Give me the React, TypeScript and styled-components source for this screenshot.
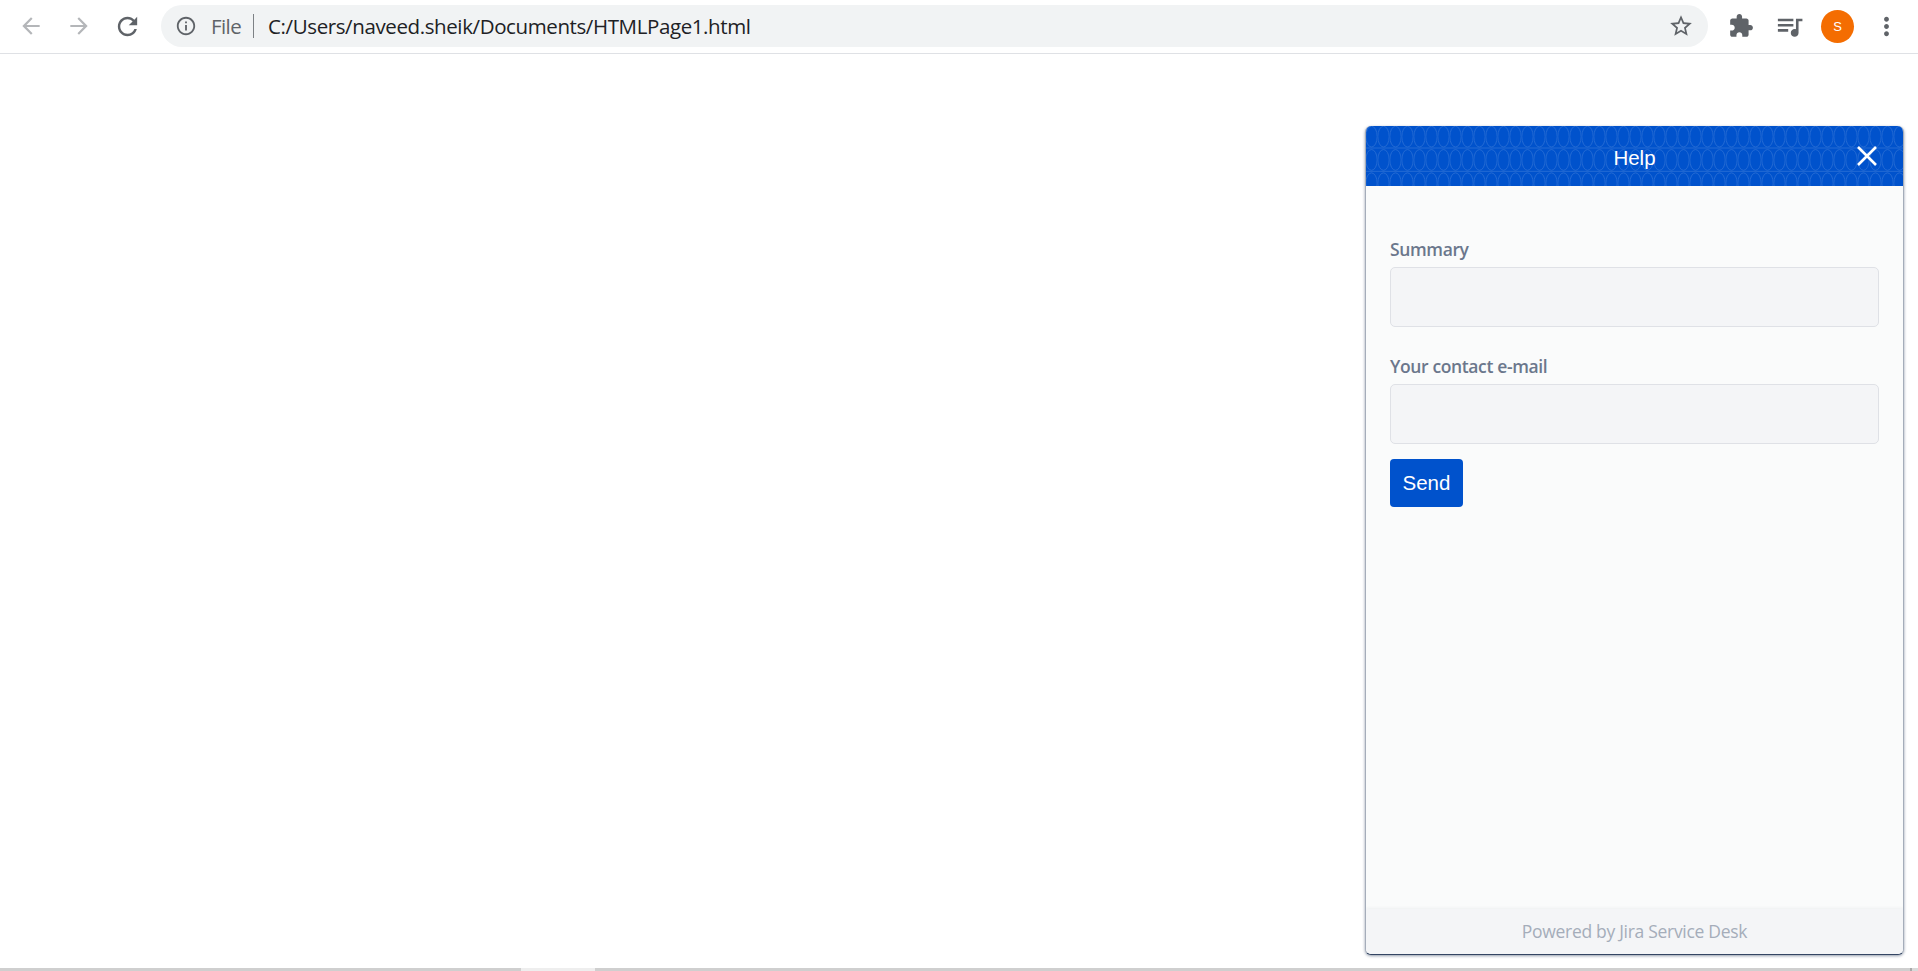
import React from "react";
import styled, { createGlobalStyle } from "styled-components";

const GlobalStyle = createGlobalStyle`
  html, body { margin: 0; padding: 0; height: 100%; background: #fff; overflow: hidden; }
  #root { height: 100%; }
  * { box-sizing: border-box; }
`;

const patternRows = [0, 23.33, 46.67]
  .map(
    (y) =>
      `<ellipse cx="6.5" cy="${y + 10.6}" rx="5.7" ry="10.4"/><path d="M-1 ${y + 22}h14"/>`
  )
  .join("");

const patternSvg = encodeURIComponent(
  `<svg xmlns="http://www.w3.org/2000/svg" width="12" height="70" viewBox="0 0 12 70"><g fill="none" stroke="#fff" stroke-width="0.9" opacity="0.15">${patternRows}</g></svg>`
);

const Page = styled.div`
  display: flex;
  flex-direction: column;
  width: 1918px;
  height: 971px;
`;

const Toolbar = styled.header`
  flex: none;
  display: flex;
  align-items: center;
  height: 54px;
  padding: 0 0 1px 15px;
  border-bottom: 1px solid #dfe1e5;
  background: #fff;
`;

const NavButton = styled.span<{ $disabled?: boolean }>`
  display: flex;
  flex: none;
  width: 32px;
  height: 32px;
  margin-right: 16px;
  align-items: center;
  justify-content: center;
  color: ${(p) => (p.$disabled ? "#b4b6b9" : "#5f6368")};
`;

const Omnibox = styled.div`
  display: flex;
  flex: none;
  align-items: center;
  width: 1547px;
  height: 42px;
  margin-left: 2px;
  padding: 0 14px 0 14px;
  border-radius: 21px;
  background: #f1f3f4;
  color: #5f6368;
`;

const Scheme = styled.span`
  margin-left: 14px;
  font: 400 20.5px "Open Sans", sans-serif;
  letter-spacing: -0.6px;
  color: #5f6368;
`;

const Divider = styled.span`
  flex: none;
  width: 1px;
  height: 24px;
  margin: 0 14px 0 12px;
  background: #7d8185;
`;

const Url = styled.span`
  flex: 1;
  font: 400 20.5px "Open Sans", sans-serif;
  letter-spacing: -0.39px;
  color: #202124;
`;

const ToolIcons = styled.div`
  display: flex;
  flex: none;
  align-items: center;
  margin-left: 17px;
  gap: 16px;
`;

const ToolIcon = styled.span`
  display: flex;
  width: 32px;
  height: 32px;
  align-items: center;
  justify-content: center;
  color: #5f6368;
`;

const Avatar = styled.span`
  display: flex;
  width: 33px;
  height: 33px;
  border-radius: 50%;
  align-items: center;
  justify-content: center;
  background: #f46d01;
  color: #fff;
  font: 400 13px "Liberation Sans", sans-serif;
`;

const Content = styled.main`
  flex: 1;
  display: flex;
  justify-content: flex-end;
  align-items: flex-start;
  padding: 72px 14px 0 0;
`;

const Widget = styled.section`
  display: flex;
  flex-direction: column;
  width: 539px;
  height: 829px;
  border-radius: 6px;
  overflow: hidden;
  background: #fafbfb;
  border: 1px solid #a5adba;
  border-top: none;
  border-bottom: 1.5px solid #344563;
  box-shadow: 0 1px 3px rgba(9, 30, 66, 0.45);
`;

const WidgetHeader = styled.div`
  position: relative;
  flex: none;
  display: flex;
  align-items: center;
  justify-content: center;
  height: 60px;
  margin: 0 -1px;
  padding-top: 4px;
  background-color: #0052cc;
  background-image: url("data:image/svg+xml,${patternSvg}");
  color: #fff;
  font: 400 20.5px "Liberation Sans", sans-serif;
`;

const CloseButton = styled.span`
  position: absolute;
  top: 19px;
  right: 26px;
  display: flex;
  color: #fff;
`;

const Form = styled.form`
  flex: 1;
  display: flex;
  flex-direction: column;
  align-items: flex-start;
  padding: 50px 24px 0 24px;
`;

const Label = styled.label`
  margin-bottom: 5px;
  font: 600 17.5px/26px "Open Sans", sans-serif;
  letter-spacing: -0.37px;
  color: #6b778c;
`;

const Field = styled.div`
  width: 100%;
  height: 60px;
  margin-bottom: 26px;
  border: 1px solid #dfe1e6;
  border-radius: 5px;
  background: #f4f5f7;
  &:last-of-type { margin-bottom: 15px; }
`;

const SendButton = styled.button`
  width: 73px;
  height: 48px;
  padding: 0;
  border: none;
  border-radius: 4px;
  background: #0052cc;
  color: #fff;
  font: 400 20.5px "Liberation Sans", sans-serif;
`;

const Footer = styled.footer`
  flex: none;
  display: flex;
  align-items: center;
  justify-content: center;
  height: 45px;
  padding-bottom: 1px;
  background: #f4f5f7;
  box-shadow: 0 -1px 3px rgba(9, 30, 66, 0.05);
  font: 400 17.5px "Open Sans", sans-serif;
  letter-spacing: -0.3px;
  color: #a5adba;
`;

const HScroll = styled.div`
  flex: none;
  display: flex;
  height: 3px;
  background: #cfcfcf;
`;

const HScrollTrack = styled.span<{ $w: number; $c: string }>`
  flex: none;
  width: ${(p) => p.$w}px;
  background: ${(p) => p.$c};
`;

const MaterialIcon = ({ d, size = 24 }: { d: string; size?: number }) => (
  <svg width={size} height={size} viewBox="0 0 24 24" fill="currentColor">
    <path d={d} />
  </svg>
);

const icons = {
  back: "M20 11H7.83l5.59-5.59L12 4l-8 8 8 8 1.41-1.41L7.83 13H20v-2z",
  forward: "M12 4l-1.41 1.41L16.17 11H4v2h12.17l-5.58 5.59L12 20l8-8z",
  reload:
    "M17.65 6.35C16.2 4.9 14.21 4 12 4c-4.42 0-7.99 3.58-7.99 8s3.57 8 7.99 8c3.73 0 6.84-2.55 7.73-6h-2.08c-.82 2.33-3.04 4-5.65 4-3.31 0-6-2.69-6-6s2.69-6 6-6c1.66 0 3.14.69 4.22 1.78L13 11h7V4l-2.35 2.35z",
  info:
    "M11 17h2v-6h-2v6zm1-15C6.48 2 2 6.48 2 12s4.48 10 10 10 10-4.48 10-10S17.52 2 12 2zm0 18c-4.41 0-8-3.59-8-8s3.59-8 8-8 8 3.59 8 8-3.59 8-8 8zm-1-11h2V7h-2v2z",
  star:
    "M22 9.24l-7.19-.62L12 2 9.19 8.63 2 9.24l5.46 4.73L5.82 21 12 17.27 18.18 21l-1.63-7.03L22 9.24zM12 15.4l-3.76 2.27 1-4.28-3.32-2.88 4.38-.38L12 6.1l1.71 4.04 4.38.38-3.32 2.88 1 4.28L12 15.4z",
  puzzle:
    "M20.5 11H19V7c0-1.1-.9-2-2-2h-4V3.5C13 2.12 11.88 1 10.5 1S8 2.12 8 3.5V5H4c-1.1 0-1.99.9-1.99 2v3.8H3.5c1.49 0 2.7 1.21 2.7 2.7s-1.21 2.7-2.7 2.7H2V20c0 1.1.9 2 2 2h3.8v-1.5c0-1.49 1.21-2.7 2.7-2.7 1.49 0 2.7 1.21 2.7 2.7V22H17c1.1 0 2-.9 2-2v-4h1.5c1.38 0 2.5-1.12 2.5-2.5S21.88 11 20.5 11z",
  queue:
    "M15 6H3v2h12V6zm0 4H3v2h12v-2zM3 16h8v-2H3v2zM17 6v8.18c-.31-.11-.65-.18-1-.18-1.66 0-3 1.34-3 3s1.34 3 3 3 3-1.34 3-3V8h3V6h-5z",
  more:
    "M12 8c1.1 0 2-.9 2-2s-.9-2-2-2-2 .9-2 2 .9 2 2 2zm0 2c-1.1 0-2 .9-2 2s.9 2 2 2 2-.9 2-2-.9-2-2-2zm0 6c-1.1 0-2 .9-2 2s.9 2 2 2 2-.9 2-2-.9-2-2-2z",
};

export default function App() {
  return (
    <Page>
      <GlobalStyle />
      <Toolbar>
        <NavButton $disabled><MaterialIcon d={icons.back} size={26} /></NavButton>
        <NavButton $disabled><MaterialIcon d={icons.forward} size={26} /></NavButton>
        <NavButton><MaterialIcon d={icons.reload} size={29} /></NavButton>
        <Omnibox>
          <MaterialIcon d={icons.info} size={22} />
          <Scheme>File</Scheme>
          <Divider />
          <Url>C:/Users/naveed.sheik/Documents/HTMLPage1.html</Url>
          <MaterialIcon d={icons.star} size={26} />
        </Omnibox>
        <ToolIcons>
          <ToolIcon><MaterialIcon d={icons.puzzle} size={26} /></ToolIcon>
          <ToolIcon><MaterialIcon d={icons.queue} size={31} /></ToolIcon>
          <Avatar>S</Avatar>
          <ToolIcon><MaterialIcon d={icons.more} size={29} /></ToolIcon>
        </ToolIcons>
      </Toolbar>
      <Content>
        <Widget>
          <WidgetHeader>
            Help
            <CloseButton>
              <svg width="22" height="22" viewBox="0 0 22 22" fill="none" stroke="currentColor" strokeWidth="2.6">
                <path d="M2 2l18 18M20 2L2 20" />
              </svg>
            </CloseButton>
          </WidgetHeader>
          <Form>
            <Label>Summary</Label>
            <Field />
            <Label>Your contact e-mail</Label>
            <Field />
            <SendButton type="button">Send</SendButton>
          </Form>
          <Footer>Powered by Jira Service Desk</Footer>
        </Widget>
      </Content>
      <HScroll>
        <HScrollTrack $w={521} $c="#cfcfcf" />
        <HScrollTrack $w={74} $c="#eeeeee" />
        <HScrollTrack $w={1315} $c="#cfcfcf" />
        <HScrollTrack $w={2} $c="#a9a9a9" />
        <HScrollTrack $w={6} $c="#d9d9d9" />
      </HScroll>
    </Page>
  );
}
